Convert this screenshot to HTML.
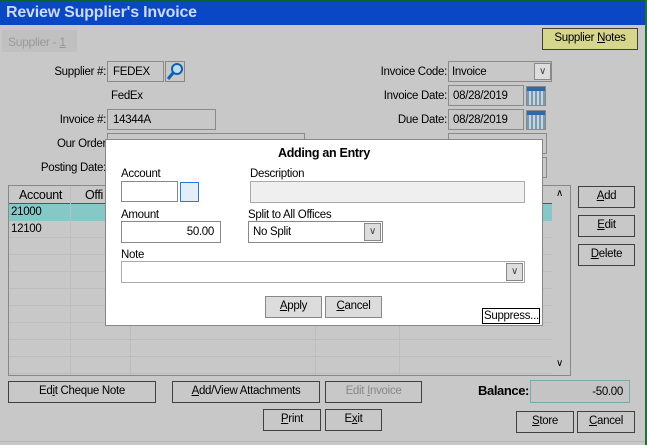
<!DOCTYPE html>
<html><head><style>
*{box-sizing:border-box;margin:0;padding:0}
body{width:647px;height:445px;background:#c8c8c8;font-family:"Liberation Sans",sans-serif;font-size:11.5px;letter-spacing:-0.3px;color:#000;position:relative;overflow:hidden;white-space:nowrap}
.a{position:absolute}
.in{position:absolute;border:1px solid #8a8a8a;background:#c8c8c8;padding:3px 5px;line-height:14px}
.btn{position:absolute;border:1px solid #404040;background:#c8c8c8;text-align:center;line-height:19px}
.lbl{position:absolute;text-align:right}
.cal{position:absolute;width:20px;height:20px;border:1px solid #888;background:linear-gradient(#2a6aa8 0 4px,transparent 4px),repeating-linear-gradient(90deg,#7a9ab0 0 2px,#c8d4dc 2px 4px);}
.dd{position:absolute;width:17px;border:1px solid #888;background:#ddd;text-align:center;font-size:10px;line-height:16px;color:#444}
.row{position:absolute;left:9px;width:543px;height:17px;border-bottom:1px solid #bdbdbd}
</style></head><body>
<div class="a" style="left:0;top:0;width:647px;height:25px;background:#0a47c4;border-top:1px solid #0a6030"></div>
<div class="a" style="left:6px;top:4px;color:#cfd8f0;font-weight:bold;font-size:16px;letter-spacing:-0.2px">Review Supplier's Invoice</div>
<div class="a" style="left:645px;top:0;width:2px;height:445px;background:#2a6a3a"></div>
<div class="a" style="left:2px;top:30px;width:75px;height:22px;background:#c0c0c0;color:#999;font-size:12px;padding:5px 6px">Supplier - <u>1</u></div>
<div class="btn" style="left:542px;top:28px;width:96px;height:22px;background:#d6d68c">Supplier <u>N</u>otes</div>

<div class="lbl" style="left:20px;top:66px;width:86px">Supplier #:</div>
<div class="in" style="left:107px;top:61px;width:57px;height:21px">FEDEX</div>
<div class="a" style="left:165px;top:61px;width:20px;height:21px;border:1px solid #888"><svg width="18" height="19"><circle cx="11" cy="7" r="5" fill="#bde" stroke="#1060b0" stroke-width="2"/><line x1="7" y1="11" x2="2" y2="17" stroke="#1060b0" stroke-width="3"/></svg></div>
<div class="a" style="left:111px;top:90px">FedEx</div>
<div class="lbl" style="left:20px;top:114px;width:86px">Invoice #:</div>
<div class="in" style="left:107px;top:109px;width:109px;height:21px">14344A</div>
<div class="lbl" style="left:20px;top:138px;width:86px">Our Order</div>
<div class="in" style="left:107px;top:133px;width:198px;height:21px"></div>
<div class="lbl" style="left:10px;top:162px;width:96px">Posting Date:</div>

<div class="lbl" style="left:340px;top:66px;width:107px">Invoice Code:</div>
<div class="in" style="left:448px;top:61px;width:104px;height:21px;padding:3px 3px">Invoice</div>
<div class="dd" style="left:534px;top:63px;height:17px">&#8744;</div>
<div class="lbl" style="left:340px;top:90px;width:107px">Invoice Date:</div>
<div class="in" style="left:448px;top:85px;width:76px;height:21px;padding:3px 4px">08/28/2019</div>
<div class="cal" style="left:526px;top:86px"></div>
<div class="lbl" style="left:340px;top:114px;width:107px">Due Date:</div>
<div class="in" style="left:448px;top:109px;width:76px;height:21px;padding:3px 4px">08/28/2019</div>
<div class="cal" style="left:526px;top:110px"></div>
<div class="in" style="left:448px;top:133px;width:99px;height:21px"></div>
<div class="in" style="left:448px;top:157px;width:99px;height:21px"></div>

<div class="a" style="left:8px;top:185px;width:563px;height:191px;border:1px solid #888;background:#c8c8c8"></div>
<div class="a" style="left:9px;top:186px;width:543px;height:18px;border-bottom:1px solid #555"></div>
<div class="a" style="left:19px;top:188px;font-size:12.5px">Account</div>
<div class="a" style="left:85px;top:188px;font-size:12.5px">Offi</div>
<div class="a" style="left:9px;top:204px;width:543px;height:17px;background:#86c8c8"></div>
<div class="a" style="left:11px;top:206px">21000</div>
<div class="a" style="left:11px;top:223px">12100</div>
<div class="row" style="top:221px"></div><div class="row" style="top:238px"></div><div class="row" style="top:255px"></div><div class="row" style="top:272px"></div><div class="row" style="top:289px"></div><div class="row" style="top:306px"></div><div class="row" style="top:323px"></div><div class="row" style="top:340px"></div><div class="row" style="top:357px"></div>
<div class="a" style="left:70px;top:186px;width:1px;height:189px;background:#bdbdbd"></div>
<div class="a" style="left:130px;top:221px;width:1px;height:154px;background:#bdbdbd"></div>
<div class="a" style="left:315px;top:221px;width:1px;height:154px;background:#bdbdbd"></div>
<div class="a" style="left:399px;top:221px;width:1px;height:154px;background:#bdbdbd"></div>
<div class="a" style="left:556px;top:188px;font-size:10px">&#8743;</div>
<div class="a" style="left:556px;top:358px;font-size:10px">&#8744;</div>

<div class="btn" style="left:578px;top:186px;width:57px;height:22px"><u>A</u>dd</div>
<div class="btn" style="left:578px;top:215px;width:57px;height:22px"><u>E</u>dit</div>
<div class="btn" style="left:578px;top:244px;width:57px;height:22px"><u>D</u>elete</div>

<div class="btn" style="left:8px;top:381px;width:148px;height:22px">Ed<u>i</u>t Cheque Note</div>
<div class="btn" style="left:172px;top:381px;width:148px;height:22px"><u>A</u>dd/View Attachments</div>
<div class="btn" style="left:325px;top:381px;width:97px;height:22px;color:#888">Edit <u>I</u>nvoice</div>
<div class="a" style="left:478px;top:383px;font-weight:bold;font-size:13px;letter-spacing:-0.4px">Balance:</div>
<div class="a" style="left:530px;top:380px;width:100px;height:23px;border:1px solid #7aa;background:#c4c4c4;text-align:right;padding:4px 6px;line-height:14px">-50.00</div>
<div class="btn" style="left:263px;top:409px;width:58px;height:22px"><u>P</u>rint</div>
<div class="btn" style="left:325px;top:409px;width:57px;height:22px">E<u>x</u>it</div>
<div class="btn" style="left:516px;top:411px;width:58px;height:22px"><u>S</u>tore</div>
<div class="btn" style="left:577px;top:411px;width:58px;height:22px"><u>C</u>ancel</div>
<div class="a" style="left:0;top:441px;width:645px;height:1px;background:#b4b4b4"></div>

<div class="a" style="left:105px;top:139px;width:438px;height:187px;background:#fff;border:1px solid #888"></div>
<div class="a" style="left:105px;top:146px;width:438px;text-align:center;font-weight:bold;font-size:12.5px">Adding an Entry</div>
<div class="a" style="left:121px;top:168px">Account</div>
<div class="a" style="left:121px;top:181px;width:57px;height:21px;border:1px solid #888;background:#fff"></div>
<div class="a" style="left:180px;top:182px;width:19px;height:20px;border:1px solid #2a7ad4;background:#e4eef8"></div>
<div class="a" style="left:250px;top:168px">Description</div>
<div class="a" style="left:250px;top:181px;width:275px;height:22px;border:1px solid #aaa;background:#efefef"></div>
<div class="a" style="left:121px;top:209px">Amount</div>
<div class="a" style="left:121px;top:221px;width:100px;height:22px;border:1px solid #888;background:#fff;text-align:right;padding:3px 6px;line-height:14px">50.00</div>
<div class="a" style="left:248px;top:209px">Split to All Offices</div>
<div class="a" style="left:248px;top:221px;width:135px;height:22px;border:1px solid #888;background:#fff;padding:3px 4px;line-height:14px">No Split</div>
<div class="dd" style="left:364px;top:223px;height:18px">&#8744;</div>
<div class="a" style="left:121px;top:249px">Note</div>
<div class="a" style="left:121px;top:261px;width:404px;height:22px;border:1px solid #aaa;background:#fff"></div>
<div class="dd" style="left:506px;top:263px;height:18px">&#8744;</div>
<div class="btn" style="left:265px;top:296px;width:57px;height:22px;background:#dcdcdc;border-color:#888"><u>A</u>pply</div>
<div class="btn" style="left:325px;top:296px;width:57px;height:22px;background:#dcdcdc;border-color:#888"><u>C</u>ancel</div>
<div class="a" style="left:482px;top:308px;width:58px;height:16px;border:1px solid #000;background:#fff;line-height:14px;padding-left:1px">Suppress...</div>
</body></html>
